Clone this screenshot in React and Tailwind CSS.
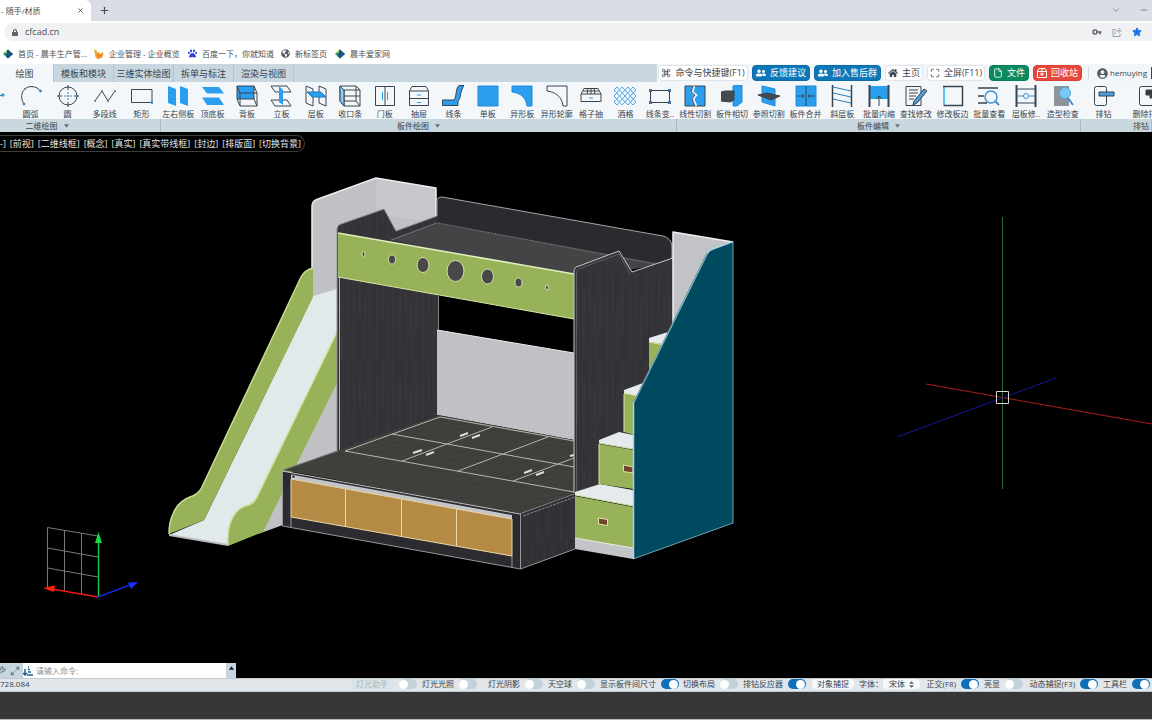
import { useState } from "react";
import {
  ChevronDown,
  Command,
  File,
  Maximize,
  Maximize2,
  Minus,
  Plus,
  Star,
  Wrench,
  X,
} from "lucide-react";
import {
  FaUserFriends,
  FaUserCircle,
  FaPaw,
  FaGlobeAmericas,
  FaHome,
  FaLock,
} from "react-icons/fa";

const BLUE = "#2a9ff0";
const INK = "#3a444e";

function Icon({ children }) {
  return (
    <svg
      viewBox="0 0 22 22"
      className="w-[22px] h-[22px] shrink-0"
      fill="none"
      stroke={INK}
      strokeWidth="1"
      aria-hidden="true"
    >
      {children}
    </svg>
  );
}

const DRAW_2D = [
  {
    name: "直线",
    label: "",
    icon: (
      <Icon>
        <path d="M2 18L19 10" />
        <circle cx="20" cy="10" r="1.2" fill={BLUE} stroke={BLUE} />
      </Icon>
    ),
  },
  {
    label: "圆弧",
    icon: (
      <Icon>
        <path d="M4 19C-1 12 2 2 11 1.500C16 1.500 19 4 20.500 6" />
        <g fill={BLUE} stroke="#4b7fae">
          <circle cx="4" cy="19" r="1" />
          <circle cx="20.500" cy="6" r="1" />
          <circle cx="5" cy="4" r=".6" />
        </g>
      </Icon>
    ),
  },
  {
    label: "圆",
    icon: (
      <Icon>
        <circle cx="11" cy="11" r="9" />
        <path d="M11 0v5M11 17v5M0 11h5M17 11h5" />
        <path d="M11 7v8M7 11h8" stroke="#3d7fb8" strokeDasharray="2 1" />
      </Icon>
    ),
  },
  {
    label: "多段线",
    icon: (
      <Icon>
        <path d="M1 16L8 6L14 16L21 6" />
        <g fill="#4b7fae" stroke="none">
          <circle cx="1" cy="16" r="1" />
          <circle cx="8" cy="6" r="1" />
          <circle cx="14" cy="16" r="1" />
          <circle cx="21" cy="6" r="1" />
        </g>
      </Icon>
    ),
  },
  {
    label: "矩形",
    icon: (
      <Icon>
        <path d="M.5 4.500h20.500v13H.5z" />
        <circle cx="21" cy="17.500" r="1" fill={BLUE} stroke="#4b7fae" />
      </Icon>
    ),
  },
];

const DRAW_BOARD = [
  {
    label: "左右侧板",
    icon: (
      <Icon>
        <path
          d="M1 1L9 4V21L1 18zM13 1L21 4V21L13 18z"
          fill={BLUE}
          stroke="none"
        />
      </Icon>
    ),
  },
  {
    label: "顶底板",
    icon: (
      <Icon>
        <path
          d="M0 2H17L22 8.500H5zM0 12.500H17L22 20H5z"
          fill={BLUE}
          stroke="none"
        />
      </Icon>
    ),
  },
  {
    label: "背板",
    icon: (
      <Icon>
        <path d="M1 1H18V14H1z" fill={BLUE} />
        <path d="M1 1L4 8H21L18 1M4 8V21H21V8M1 14L4 21M18 14L21 21" />
      </Icon>
    ),
  },
  {
    label: "立板",
    icon: (
      <Icon>
        <path d="M1 1H17L21 7H5zM1 15H17L21 21H5z" />
        <path d="M9 1L13 5V20L9 17z" fill={BLUE} stroke="none" />
      </Icon>
    ),
  },
  {
    label: "层板",
    icon: (
      <Icon>
        <path d="M1 1L8 4V21L1 18zM14 1L21 4V21L14 18z" />
        <path d="M2 7H16L21 12H7z" fill={BLUE} stroke="#2277b8" />
      </Icon>
    ),
  },
  {
    label: "收口条",
    icon: (
      <Icon>
        <path d="M1 1H17L21 5H5zM5 5V21H21V5M1 1V16L5 21M1 16H17L21 21M17 1V16M5 11H21" />
        <path d="M1 1L5 5V21L1 16z" fill="#8ccbf3" />
      </Icon>
    ),
  },
  {
    label: "门板",
    icon: (
      <Icon>
        <path d="M1.500 1.500h19v19h-19zM11 1.500v19" />
        <path d="M8.500 7v8M13.500 7v8" stroke={BLUE} />
      </Icon>
    ),
  },
  {
    label: "抽屉",
    icon: (
      <Icon>
        <path d="M1.500 6L4 1.500H18L20.500 6V20.500H1.500zM1.500 6h19M1.500 13.500h19" />
        <path d="M9 10h4M9 17.500h4" stroke={BLUE} />
      </Icon>
    ),
  },
  {
    label: "线条",
    icon: (
      <Icon>
        <path
          d="M.5 15H12C15 12 13 4 17 .5H22C18 6 19 14 16 16V20.500H.5z"
          fill={BLUE}
        />
      </Icon>
    ),
  },
  {
    label: "单板",
    icon: (
      <Icon>
        <path d="M1 1h20v20H1z" fill={BLUE} stroke="#2488d0" />
      </Icon>
    ),
  },
  {
    label: "异形板",
    icon: (
      <Icon>
        <path d="M1 1H21V21H16C15 13 10 8 1 7z" fill={BLUE} stroke="#2488d0" />
      </Icon>
    ),
  },
  {
    label: "异形轮廓",
    icon: (
      <Icon>
        <path d="M1 1H21V21H17C16 12 10 7 1 6z" />
      </Icon>
    ),
  },
  {
    label: "格子抽",
    icon: (
      <Icon>
        <path d="M1 9L4 3.500H18L21 9V16.500H1zM1 9H21M3 6H19M8 3.500L7 9M11 3.500V9M14 3.500L15 9" />
        <path d="M9 13h4" stroke={BLUE} />
      </Icon>
    ),
  },
  {
    label: "酒格",
    icon: (
      <Icon>
        <path
          d="M0 5L3 2L19 20L22 17L8 2L0 11L8 20L22 5L19 2L3 20L0 17L14 2L22 11L14 20L0 5"
          stroke="#4aa9ea"
        />
      </Icon>
    ),
  },
  {
    label: "线条变..",
    icon: (
      <Icon>
        <path d="M1.500 5.500h19v12h-19z" />
        <g fill="#4b6f92" stroke="none">
          <path d="M0 4h3v3H0zM19 4h3v3h-3zM0 16h3v3H0zM19 16h3v3h-3z" />
        </g>
      </Icon>
    ),
  },
];

const EDIT_BOARD = [
  {
    label: "线性切割",
    icon: (
      <Icon>
        <path d="M1 1h20v20H1z" fill={BLUE} />
        <path
          d="M10 1L8 7L12 10L9 14L12 21"
          stroke="#f3f7fa"
          strokeWidth="2.5"
        />
        <path d="M9 1L7 7L11 10L8 14L11 21" />
      </Icon>
    ),
  },
  {
    label: "板件相切",
    icon: (
      <Icon>
        <path d="M12 1L17 0H21V17L16 21H12z" fill={BLUE} stroke="#2488d0" />
        <path d="M0 7L4 6H13V15L9 17L0 16z" fill="#454a50" />
      </Icon>
    ),
  },
  {
    label: "参照切割",
    icon: (
      <Icon>
        <path d="M4 1L17 4V21L4 17z" fill={BLUE} stroke="#2488d0" />
        <path d="M0 10L9 8L22 11L13 15z" fill="#454a50" />
      </Icon>
    ),
  },
  {
    label: "板件合并",
    icon: (
      <Icon>
        <path d="M1 1h20v20H1z" fill={BLUE} stroke="#2488d0" />
        <path d="M11 1v20M2 11h7M7 9l2 2l-2 2M20 11h-7M15 9l-2 2l2 2" />
      </Icon>
    ),
  },
  {
    label: "斜层板",
    icon: (
      <Icon>
        <path d="M1.500 0v22M20.500 0v22" strokeWidth="1.5" />
        <path d="M2 2L20 6M2 8L20 12M2 14L20 18" stroke="#2b7fc0" />
      </Icon>
    ),
  },
  {
    label: "批量内缩",
    icon: (
      <Icon>
        <path d="M2 1h18v13H2z" fill={BLUE} stroke="none" />
        <path d="M1.500 0v22M20.500 0v22" strokeWidth="2" />
        <path d="M11 21V11M8 14l3-3l3 3" />
      </Icon>
    ),
  },
  {
    label: "查找修改",
    icon: (
      <Icon>
        <path d="M1 1.500h15v19H1zM4 5h9M4 8h9M4 11h7M4 14h5" />
        <path d="M19 4L22 6L12 18L8 20L9 16z" fill="#4a9fdc" />
      </Icon>
    ),
  },
  {
    label: "修改板边",
    icon: (
      <Icon>
        <path d="M2 1v20" stroke="#5cc0fb" strokeWidth="2" />
        <path d="M1 1.500h19.500V20.500H2" strokeWidth="1.5" />
      </Icon>
    ),
  },
  {
    label: "批量查看",
    icon: (
      <Icon>
        <path d="M0 3h20M0 11h6M0 18h9" strokeWidth="1.500" />
        <circle cx="13" cy="12" r="6" stroke="#3f91cf" strokeWidth="1.500" />
        <path d="M17 16l4 4" stroke="#3f91cf" strokeWidth="2" />
      </Icon>
    ),
  },
  {
    label: "层板修..",
    icon: (
      <Icon>
        <path d="M1.500 0v22M20.500 0v22" strokeWidth="2" />
        <path d="M2 4h18M2 18h18" />
        <path d="M2 11h18" stroke="#3f91cf" />
        <circle cx="11" cy="11" r="2.500" fill="#f3f7fa" stroke="#3f91cf" />
      </Icon>
    ),
  },
  {
    label: "造型检查",
    icon: (
      <Icon>
        <path d="M2 1h15v20H2z" fill="#8c949c" stroke="none" />
        <circle cx="13" cy="8" r="5.500" fill="#7cc8f5" stroke="#4aa9ea" />
        <path d="M16 13l5 7" stroke="#3f91cf" strokeWidth="2" />
      </Icon>
    ),
  },
];

const DRILL = [
  {
    label: "排钻",
    icon: (
      <Icon>
        <rect x="1.500" y="1.500" width="12" height="19" rx="2" />
        <path d="M6 7h15v4H6z" fill="#4a9fdc" />
      </Icon>
    ),
  },
  {
    label: "删除排钻",
    icon: (
      <Icon>
        <rect x="1.500" y="1.500" width="15" height="19" rx="2" />
        <path d="M8 5h13v5H8zM12 10h7v3h-7z" fill="#33383d" />
      </Icon>
    ),
  },
];

const RIBBON_TABS = ["绘图", "模板和模块", "三维实体绘图", "拆单与标注", "渲染与视图"];

const VIEW_LABELS = [
  "[前视]",
  "[二维线框]",
  "[概念]",
  "[真实]",
  "[真实带线框]",
  "[封边]",
  "[排版面]",
  "[切换背景]",
];

function LeafLogo() {
  return (
    <svg viewBox="0 0 10 10" className="w-[10px] h-[10px] shrink-0">
      <path d="M0 5L5 .5L10 5L5 9.500z" fill="#1e9e5a" />
      <path d="M5 .5L10 5L5 9.500C2 8 3 3 5 .5z" fill="#1d4f8c" />
      <path d="M1 4L4 1L4 4z" fill="#8fd14a" />
    </svg>
  );
}

function CrownLogo() {
  return (
    <svg viewBox="0 0 10 10" className="w-[10px] h-[10px] shrink-0">
      <path
        d="M0 0L3 2V4L5 3L6 5L9 3C10 6 9 9 5 10C2 10 1 8 1 5z"
        fill="#f2a136"
      />
      <path d="M4 5v3M6.500 5.500v2" stroke="#d4641a" />
    </svg>
  );
}

function ShareIcon({ className }) {
  return (
    <svg
      viewBox="0 0 10 10"
      className={className}
      fill="none"
      stroke="currentColor"
    >
      <path d="M4 2.500H1v7h7V7" />
      <path d="M3 7C3 4 5 3.500 8 3.500M6.500 1L9 3.500L6.500 6" />
    </svg>
  );
}

function KeyIcon({ className }) {
  return (
    <svg viewBox="0 0 10 10" className={className} fill="none">
      <circle cx="3" cy="5" r="2" stroke="currentColor" strokeWidth="1.5" />
      <path d="M5 5H9.500M8 5V7.500" stroke="currentColor" strokeWidth="1.5" />
    </svg>
  );
}

function BinIcon({ className }) {
  return (
    <svg
      viewBox="0 0 10 10"
      className={className}
      fill="none"
      stroke="currentColor"
    >
      <path d="M2 .5h6L9.500 3v6.500h-9V3zM.5 3.500h9M5 .5v3M3 6h4M5 4.500v3.500" />
    </svg>
  );
}

const BOOKMARKS = [
  { text: "首页 - 晨丰生产管...", width: "w-[91px]", icon: <LeafLogo /> },
  { text: "企业管理 - 企业概览", width: "w-[94px]", icon: <CrownLogo /> },
  {
    text: "百度一下，你就知道",
    width: "w-[93px]",
    icon: <FaPaw className="w-[9px] h-[9px] shrink-0 text-[#3140d8]" />,
  },
  {
    text: "新标签页",
    width: "w-[54px]",
    icon: <FaGlobeAmericas className="w-[9px] h-[9px] shrink-0 text-[#555a60]" />,
  },
  { text: "晨丰爱家网", width: "w-[60px]", icon: <LeafLogo /> },
];

function BrowserChrome() {
  return (
    <div className="bg-white text-[#4a4e52]">
      <div className="flex items-center h-[21px] bg-[#d9dde5]">
        <div className="flex items-center justify-between w-[91px] h-full pl-px pr-[7px] bg-white rounded-tr-md text-[8px]">
          <span>- 随手/材质</span>
          <button aria-label="关闭标签页">
            <X className="w-[7px] h-[7px]" strokeWidth={3} />
          </button>
        </div>
        <button aria-label="新标签页" className="ml-2">
          <Plus className="w-[11px] h-[11px]" strokeWidth={2.5} />
        </button>
        <div className="ml-auto flex items-center gap-[18px] pr-[3px] pb-0.5 text-[#7a7f86]">
          <ChevronDown className="w-[10px] h-[10px]" />
          <Minus className="w-[10px] h-[10px]" />
        </div>
      </div>
      <div className="flex items-center h-[22px] pl-1">
        <div className="flex flex-1 items-center h-[18px] pl-[8px] pr-[10px] rounded-l-full bg-[#eff1f3]">
          <FaLock className="w-[6px] h-[7px] text-[#5f6368]" />
          <input
            aria-label="地址"
            defaultValue="cfcad.cn"
            className="flex-1 ml-[7px] bg-transparent outline-none text-[9px] leading-4"
          />
          <div className="flex items-center gap-[10px] text-[#5f6368]">
            <KeyIcon className="w-[10px] h-[10px]" />
            <ShareIcon className="w-[10px] h-[10px] text-[#9a9fa5]" />
            <Star className="w-[10px] h-[10px] text-[#1a73e8]" fill="#1a73e8" />
          </div>
        </div>
      </div>
      <div className="flex items-center h-[21px] pl-[3px] text-[8px] whitespace-nowrap">
        {BOOKMARKS.map((b) => (
          <a
            key={b.text}
            href="#"
            className={"flex items-center gap-[5px] shrink-0 " + b.width}
          >
            {b.icon}
            {b.text}
          </a>
        ))}
      </div>
    </div>
  );
}

function BarButton({ className, icon: BarIcon, children }) {
  return (
    <button
      className={
        "flex items-center justify-center gap-1 h-4 shrink-0 rounded-sm border " +
        className
      }
    >
      <BarIcon className="w-[10px] h-[10px] shrink-0" />
      {children}
    </button>
  );
}

const PLAIN = "bg-white border-[#dfe5e9] text-[#3a4650] ";
const PRIMARY = "bg-[#0d77b8] border-[#0d6ca8] text-white ";

function Ribbon() {
  const [active, setActive] = useState("绘图");

  return (
    <header className="overflow-hidden text-[#37434d] whitespace-nowrap">
      <div className="flex h-[18px] bg-[#c8d6df] text-[9px]">
        {RIBBON_TABS.map((t, i) => (
          <button
            key={t}
            onClick={() => setActive(t)}
            className={
              "shrink-0 border-r border-[#b4c4ce] pt-0.5 " +
              (i === 0 ? "w-[54px] pr-1 " : "w-[60px] ") +
              (active === t ? "bg-[#f3f7fa]" : "")
            }
          >
            {t}
          </button>
        ))}
        <div className="ml-auto flex items-center gap-1 h-full w-[495px] pl-px shrink-0 overflow-hidden bg-[#f3f6f8]">
          <BarButton className={PLAIN + "w-[90px]"} icon={Command}>
            命令与快捷键(F1)
          </BarButton>
          <BarButton className={PRIMARY + "w-[58px]"} icon={FaUserFriends}>
            反馈建议
          </BarButton>
          <BarButton className={PRIMARY + "w-[67px]"} icon={FaUserFriends}>
            加入售后群
          </BarButton>
          <BarButton className={PLAIN + "w-[38px]"} icon={FaHome}>
            主页
          </BarButton>
          <BarButton className={PLAIN + "w-[58px]"} icon={Maximize}>
            全屏(F11)
          </BarButton>
          <BarButton
            className="bg-[#0b8a61] border-[#0b7d58] text-white w-[40px]"
            icon={File}
          >
            文件
          </BarButton>
          <BarButton
            className="bg-[#e8483c] border-[#db4035] text-white w-[49px]"
            icon={BinIcon}
          >
            回收站
          </BarButton>
          <div className="flex items-center gap-0.5 h-3 ml-0.5 pl-2 border-l border-[#cfd6dc] text-[8px]">
            <FaUserCircle className="w-[11px] h-[11px] text-[#4d5c69]" />
            hemuying
          </div>
          <button
            aria-label="退出"
            className="w-4 h-3 shrink-0 border border-[#37434d]"
          />
        </div>
      </div>

      <div className="grid grid-cols-[161fr_516fr_404fr_71fr] bg-[#f3f7fa]">
        <ToolGroup
          title="二维绘图"
          tools={DRAW_2D}
          rowClass="justify-end pr-px"
          itemClass="w-[37px] shrink-0"
          titleClass="justify-center pr-[66px]"
        />
        <ToolGroup
          title="板件绘图"
          tools={DRAW_BOARD}
          itemClass="flex-1 min-w-0"
        />
        <ToolGroup
          title="板件编辑"
          tools={EDIT_BOARD}
          itemClass="flex-1 min-w-0"
        />
        <ToolGroup
          title="排钻"
          tools={DRILL}
          itemClass="w-[45px] shrink-0"
          titleClass="pl-[52px]"
        />
      </div>
    </header>
  );
}

function ToolGroup({
  title,
  tools,
  itemClass,
  rowClass = "",
  titleClass = "justify-center",
}) {
  return (
    <section className="min-w-0 overflow-hidden">
      <div className={"flex h-[37px] pt-[3px] overflow-hidden " + rowClass}>
        {tools.map((t) => (
          <button
            key={t.name || t.label}
            aria-label={t.name}
            className={
              "flex flex-col items-center text-[8px] leading-[14px] " +
              itemClass
            }
          >
            {t.icon}
            {t.label}
          </button>
        ))}
      </div>
      <div
        className={
          "flex items-center gap-[6px] h-[13px] bg-[#c9d7df] border-r border-[#a9bac5] text-[8px] leading-[12px] " +
          titleClass
        }
      >
        <span className="shrink-0">{title}</span>
        <svg viewBox="0 0 6 4" className="w-[5px] h-[4px] shrink-0">
          <path d="M0 0h6L3 4z" fill="#5f7482" />
        </svg>
      </div>
    </section>
  );
}

function BunkBed() {
  return (
    <g strokeLinejoin="round">
      {/* slide tower */}
      <path
        d="M312 300V206Q312 201 318 199L376 178L436 188V222L396 245L337 292z"
        fill="#c0c1c5"
      />
      <path d="M376 178L436 188V222L376 215z" fill="#c6c7ca" />
      <path
        d="M312 296V206Q312 201 318 199L376 178L436 188V217"
        fill="none"
        stroke="#ededf0"
        strokeWidth="1.500"
      />
      <path d="M337 380V451L283 471V525L258 534z" fill="#c0c1c5" />

      {/* slide */}
      <path
        d="M313 296L337 289V335L259 497L245 508L234 522L228 545L169 535L204 520z"
        fill="#e2e9eb"
      />
      <path d="M169 534L228 544V546L169 536z" fill="#b9bdc0" />
      <path
        d="M313 268Q305 270 301 277L201 489Q197 495 190 497Q178 501 173 514Q169 522 169 534L204 520L313 297z"
        fill="#97b258"
      />
      <path
        d="M313 268Q305 270 301 277L201 489Q197 495 190 497Q178 501 173 514Q169 522 169 534"
        fill="none"
        stroke="#c9dd92"
        strokeWidth="1.500"
      />
      <path
        d="M337 332L257 497Q253 505 245 506Q236 509 231 521Q227 531 228 546L263 532L337 383z"
        fill="#97b258"
      />
      <path
        d="M337 332L257 497Q253 505 245 506Q236 509 231 521Q227 531 228 545"
        fill="none"
        stroke="#cfe29a"
        strokeWidth="1.500"
      />

      {/* upper bunk */}
      <path
        d="M437 224V201Q437 197 442 197L663 236Q671 238 672 246V262L655 266z"
        fill="#2b2b2f"
      />
      <path
        d="M437 216V201Q437 197 442 197L663 236Q671 238 672 246V258"
        fill="none"
        stroke="#a4a4a8"
      />
      <path d="M385 242L438 223L662 264L574 280z" fill="#444446" />
      <path
        d="M438 223L655 264"
        stroke="#77777a"
        strokeDasharray="2 1"
        fill="none"
      />
      <path
        d="M337 452V229Q337 225 341 224L384 209L396 231L437 216L438 223L392 240L438 250V415z"
        fill="#343338"
      />
      <path
        d="M337 452V229Q337 225 341 224L384 209L396 231L437 216V223L392 240L438 250V415z"
        fill="url(#grain)"
      />
      <path
        d="M337 452V229Q337 225 341 224L384 209L396 231L437 216"
        fill="none"
        stroke="#909094"
      />
      <path d="M391 240L437 223" stroke="#77777a" />
      <path d="M339.500 234V451" stroke="#b0b0b4" />

      {/* wall behind the lower bunk */}
      <path d="M438 295L574 319V353L438 330z" fill="#000" />
      <path d="M437 330L574 353V440L437 415z" fill="#c0c1c5" />
      <path d="M437 330L574 353" stroke="#ededf0" />
      <path d="M438.500 296V330" stroke="#88888c" />

      {/* rail with portholes */}
      <path d="M338 233L574 274V319L338 277z" fill="#97b258" />
      <path
        d="M338 233L574 274"
        stroke="#e4efc0"
        strokeWidth="1.500"
        fill="none"
      />
      <path d="M338 277L574 319" stroke="#d8e8ac" fill="none" />
      <g fill="#48484b" stroke="#d4e3a8">
        <ellipse cx="363.500" cy="254" rx="1.500" ry="2.500" />
        <ellipse cx="392" cy="259.500" rx="3.500" ry="4.500" />
        <ellipse cx="423" cy="265" rx="6" ry="7.500" />
        <ellipse cx="455.500" cy="271" rx="8.500" ry="10.500" />
        <ellipse cx="487.500" cy="276.500" rx="6" ry="7.500" />
        <ellipse cx="518.500" cy="282.500" rx="3.500" ry="4.500" />
        <ellipse cx="547" cy="287.500" rx="1.500" ry="2.500" />
      </g>

      {/* lower platform */}
      <path d="M283 470L438 415L574 440V494L520 514z" fill="#3e3f3b" />
      <path d="M283 470L438 415L574 440V494L520 514z" fill="url(#plank)" />
      <g stroke="#b4b5b1" fill="none">
        <path d="M574 492L345 451L440 417L574 441" />
        <path d="M392 434L574 467M402 461L492 427M458 471L548 437M513 481L574 458" />
        <path d="M283 470L338 451" stroke="#77787a" />
      </g>
      <g stroke="#dcdcd8" strokeWidth="2">
        <path d="M413 453L422 450M426 455L434 452M460 436L468 433M472 438L480 435M524 473L532 470M536 475L544 472M570 456L574 455" />
      </g>
      <path d="M282 471L520 514V569L282 526z" fill="#2c2b30" />
      <path d="M282 471L520 514L575 494" stroke="#c5c5c5" fill="none" />
      <path d="M291 474.500L512 515V519L291 479z" fill="#c3c4c7" />
      <path d="M292 475h3v3h-3z" fill="#222" stroke="#fff" strokeWidth=".5" />
      <path d="M291 479L512 519V556L291 517z" fill="#b48a44" />
      <path
        d="M291 479L512 519V556L291 517zM345.500 489V527M401.500 499V537M456.500 509V546"
        fill="none"
        stroke="#ecd7a8"
      />
      <path d="M520 514L575 494V549L520 569z" fill="#323136" />
      <path d="M520 514L575 494V549L520 569z" fill="url(#grain)" />
      <path d="M523 516L575 497" stroke="#85858a" strokeDasharray="3 1" />
      <path
        d="M282.500 471V526L520.500 569L575 549M520.500 514V569M512 556V567M291 517V528"
        fill="none"
        stroke="#97979b"
      />

      {/* right side panel */}
      <path
        d="M574 493V271Q574 267 579 266L619 251L632 272L673 258V400L600 486z"
        fill="#343338"
      />
      <path
        d="M574 493V271Q574 267 579 266L619 251L632 272L673 258V400L600 486z"
        fill="url(#grain)"
      />
      <path
        d="M574 493V271Q574 267 579 266L619 251L632 272L673 258"
        fill="none"
        stroke="#c8c8cc"
      />
      <path
        d="M576.500 493V272Q577 269 581 268L619 254L630 274"
        fill="none"
        stroke="#5c5c61"
      />

      {/* staircase */}
      <path d="M673 232L733 242L700 290L673 340z" fill="#c2c3c6" />
      <path
        d="M673 340V232L733 242"
        fill="none"
        stroke="#f0f0f2"
        strokeWidth="1.500"
      />
      <g fill="#e6eaec">
        <path d="M649 338L668 332L664 345L649 342z" />
        <path d="M624 390L643 383L638 396L624 394z" />
        <path d="M599 440L619 432L633 435V449L599 443z" />
        <path d="M575 492L600 484L633 490V506L575 495z" />
      </g>
      <g fill="#97b258">
        <path d="M649 342L664 344L652 371H649z" />
        <path d="M624 393L638 396L634 403V435L624 432z" />
        <path d="M599 444L633 450V489L599 484z" />
        <path d="M575 496L633 507V548L575 538z" />
      </g>
      <path
        d="M649 342L664 345M624 393L638 396M599 443L633 449M575 495L633 506M599 444V484M624 394V432"
        fill="none"
        stroke="#d5e4a8"
      />
      <path d="M575 538L633 548V559L575 549z" fill="#c3c4c7" />
      <path d="M575 538L633 548" stroke="#f0f0ea" />
      <g fill="#6e4630" stroke="#e8dfb0">
        <path d="M598.500 518L607.500 519.500V525.500L598.500 524z" />
        <path d="M623.500 465L633 467V473L623.500 471.500z" />
      </g>
      <path
        d="M633 559V403L707 254Q709 250 713 249L733 241.500V523z"
        fill="#004a60"
      />
      <path d="M733 241.500V523L633 559" fill="none" stroke="#6fa3b2" />
      <path
        d="M633.500 559V403L707 254Q709 250 713 249L733 241.500"
        fill="none"
        stroke="#a9d5e2"
        strokeWidth="1.500"
      />
      <path d="M634 402L707 253" stroke="#004a60" strokeWidth=".5" />
    </g>
  );
}

function Scene() {
  return (
    <svg
      viewBox="0 132 1152 546"
      className="flex-1 min-w-0 min-h-0"
      role="img"
      aria-label="三维视图"
    >
      <defs>
        <pattern
          id="grain"
          width="23"
          height="90"
          patternUnits="userSpaceOnUse"
        >
          <path
            d="M2 0V60M9 20V90M15 0V45M20 30V90"
            stroke="#4a494f"
            strokeOpacity=".2"
          />
          <path
            d="M5 0V90M12 10V80M18 0V50"
            stroke="#222126"
            strokeOpacity=".2"
          />
        </pattern>
        <pattern
          id="plank"
          width="80"
          height="17"
          patternUnits="userSpaceOnUse"
          patternTransform="rotate(-12)"
        >
          <path
            d="M0 3H60M20 8H80M5 14H50"
            stroke="#55564f"
            strokeOpacity=".25"
          />
        </pattern>
      </defs>

      <BunkBed />

      {/* cursor crosshair */}
      <g fill="none">
        <path d="M1002.500 217V489" stroke="#2f6636" />
        <path d="M926 384L1152 424" stroke="#a81d16" />
        <path d="M897 437L1056 378" stroke="#12189a" />
        <path d="M996.500 391.500h12v12h-12z" stroke="#d8d8d8" />
      </g>

      {/* axis gizmo */}
      <g fill="none" stroke="#77797b">
        <path d="M47.500 589V527.500L98 536M47.500 548L98 557M47.500 568L98 577M64.500 530V591M81.500 533V594" />
      </g>
      <path d="M98.500 597V540" stroke="#16c740" strokeWidth="1.500" />
      <path d="M98.500 532L102 543H95z" fill="#16d844" />
      <path d="M98 597L52 589" stroke="#f0180c" strokeWidth="1.500" />
      <path d="M43 588L55 585.500L54 592z" fill="#ff2010" />
      <path d="M98 597L130 585" stroke="#1226e0" strokeWidth="1.500" />
      <path d="M138 582L128 582.500L131 589z" fill="#1830ff" />
    </svg>
  );
}

function CommandLine() {
  return (
    <div className="absolute left-0 bottom-0 flex items-center w-[236px] h-[15px] bg-[#c8d6df] text-[#466]">
      <button aria-label="设置" className="-ml-1">
        <Wrench className="w-[10px] h-[10px]" />
      </button>
      <button aria-label="展开" className="ml-1">
        <Maximize2 className="w-[10px] h-[10px]" />
      </button>
      <div className="flex flex-1 items-center gap-[3px] h-full ml-[3px] bg-white">
        <svg viewBox="0 0 10 10" className="w-[10px] h-[10px] shrink-0">
          <path
            d="M2 3v6M0 7l2 2l2-2M5 1h1M5 3.500h2M5 6h3M4 9h6"
            fill="none"
            stroke="#1f5f8c"
            strokeWidth="1.500"
          />
        </svg>
        <input
          aria-label="命令"
          placeholder="请输入命令:"
          className="flex-1 min-w-0 outline-none text-[8px] leading-[14px] placeholder:text-[#8a8f94]"
        />
      </div>
      <button
        aria-label="历史"
        className="flex justify-center w-[10px] h-full pt-[3px]"
      >
        <svg viewBox="0 0 6 4" className="w-[5px] h-[4px]">
          <path d="M0 4h6L3 0z" fill="#111" />
        </svg>
      </button>
    </div>
  );
}

function Toggle({ label, width, on = false }) {
  const [checked, setChecked] = useState(on);
  return (
    <label
      className={"flex items-center justify-end gap-[5px] shrink-0 " + width}
    >
      {label}
      <input
        type="checkbox"
        role="switch"
        aria-label={label || "灯光助手"}
        checked={checked}
        onChange={() => setChecked(!checked)}
        className="flex items-center appearance-none w-[18px] h-[10px] shrink-0 rounded-full bg-[#c3d1d8] checked:bg-[#0d70b8] before:block before:w-[9px] before:h-[9px] before:rounded-full before:bg-white checked:before:ml-[8px]"
      />
    </label>
  );
}

function StatusBar() {
  return (
    <footer className="flex items-center h-[14px] overflow-hidden pr-0.5 pb-0.5 bg-[#e0e6ea] border-y border-[#c2cace] text-[8px] leading-[10px] text-[#37434d] whitespace-nowrap">
      <span>728.084</span>
      <div className="ml-auto flex items-center">
        <button
          disabled
          className="w-[42px] h-[10px] rounded-sm bg-[#dae3e8] text-[#a9b6bf]"
        >
          灯光助手
        </button>
        <Toggle width="w-[24px]" />
        <Toggle label="灯光光照" width="w-[60px]" />
        <Toggle label="灯光阴影" width="w-[66px]" />
        <Toggle label="天空球" width="w-[52px]" />
        <Toggle label="显示板件间尺寸" width="w-[84px]" on />
        <Toggle label="切换布局" width="w-[59px]" />
        <Toggle label="排钻反应器" width="w-[68px]" on />
        <button className="w-[42px] h-[10px] ml-[6px] rounded-sm bg-[#f6f8f9]">
          对象捕捉
        </button>
        <label className="flex items-center justify-end w-[66px] shrink-0">
          字体：
          <span className="flex items-center h-[10px] w-[37px] pr-[6px] rounded-sm bg-[#f6f8f9]">
            <select className="flex-1 min-w-0 appearance-none bg-transparent pl-[6px] outline-none">
              <option>宋体</option>
              <option>黑体</option>
            </select>
            <svg viewBox="0 0 6 8" className="w-[5px] h-[7px] shrink-0">
              <path d="M0 3L3 0L6 3zM0 5L3 8L6 5z" fill="#555f68" />
            </svg>
          </span>
        </label>
        <Toggle label="正交(F8)" width="w-[59px]" on />
        <Toggle label="亮显" width="w-[44px]" />
        <Toggle label="动态捕捉(F3)" width="w-[75px]" on />
        <Toggle label="工具栏" width="w-[52px]" on />
      </div>
    </footer>
  );
}

function App() {
  return (
    <div className="flex flex-col h-screen overflow-hidden font-['Open_Sans','Noto_Sans_CJK_SC',sans-serif]">
      <BrowserChrome />
      <Ribbon />
      <main className="relative flex flex-1 min-h-0 bg-black">
        <Scene />
        <div className="absolute left-0 top-[3px] flex items-center gap-1 h-[17px] pr-[3px] rounded-r-full border border-l-0 border-[#3c3c3c] text-[9px] leading-[14px] text-[#e4e4e4] whitespace-nowrap">
          <span>-]</span>
          {VIEW_LABELS.map((v) => (
            <button key={v}>{v}</button>
          ))}
        </div>
        <CommandLine />
      </main>
      <StatusBar />
      <div className="h-7 bg-[#373737] border-b border-[#b8b8b8]" />
    </div>
  );
}

export default App;
